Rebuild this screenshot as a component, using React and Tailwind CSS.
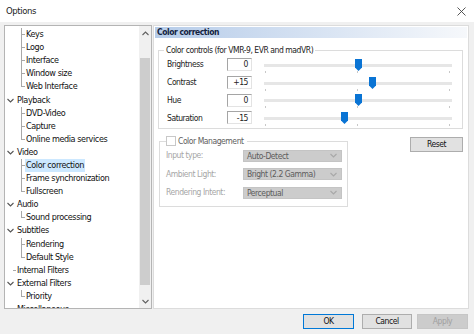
import React from 'react';

const tree = [
  { t: 'Keys', c: true }, { t: 'Logo', c: true }, { t: 'Interface', c: true }, { t: 'Window size', c: true }, { t: 'Web Interface', c: true, last: true },
  { t: 'Playback', p: true }, { t: 'DVD-Video', c: true }, { t: 'Capture', c: true }, { t: 'Online media services', c: true, last: true },
  { t: 'Video', p: true }, { t: 'Color correction', c: true, sel: true }, { t: 'Frame synchronization', c: true }, { t: 'Fullscreen', c: true, last: true },
  { t: 'Audio', p: true }, { t: 'Sound processing', c: true, last: true },
  { t: 'Subtitles', p: true }, { t: 'Rendering', c: true }, { t: 'Default Style', c: true, last: true },
  { t: 'Internal Filters', leaf: true },
  { t: 'External Filters', p: true }, { t: 'Priority', c: true, last: true },
  { t: 'Miscellaneous', leaf: true },
];

function Chevron({ up = false, color = '#606060' }) {
  return (
    <svg width="7" height="5" viewBox="0 0 7 5" className="block">
      <polyline points={up ? '0.5,4 3.5,1 6.5,4' : '0.5,1 3.5,4 6.5,1'} fill="none" stroke={color} strokeWidth="1.1" />
    </svg>
  );
}

function TreeRow({ item }) {
  if (item.c) {
    return (
      <div className="flex h-[13.1px] items-stretch">
        <div className="w-[16px] shrink-0" />
        <div className="flex w-[4px] shrink-0 flex-col">
          <div className="h-[7px] border-b border-l border-[#a8a8a8]" />
          <div className={item.last ? 'flex-1' : 'flex-1 border-l border-[#a8a8a8]'} />
        </div>
        <span className={item.sel ? 'whitespace-nowrap bg-[#cce8ff] px-[1px] leading-[13px]' : 'whitespace-nowrap px-[1px] leading-[13px]'}>{item.t}</span>
      </div>
    );
  }
  if (item.leaf) {
    return (
      <div className="flex h-[13.1px] items-stretch">
        <div className="w-[8px] shrink-0" />
        <div className="h-[7px] w-[3px] shrink-0 border-b border-[#a8a8a8]" />
        <span className="ml-[1px] whitespace-nowrap leading-[13px]">{item.t}</span>
      </div>
    );
  }
  return (
    <div className="flex h-[13.1px] items-center">
      <div className="w-[2px] shrink-0" />
      <div className="flex w-[7px] shrink-0 justify-center"><Chevron color="#555" /></div>
      <div className="w-[3px] shrink-0" />
      <span className="whitespace-nowrap leading-[13px]">{item.t}</span>
    </div>
  );
}

function Thumb() {
  return (
    <svg width="7" height="12" viewBox="0 0 7 12" className="block">
      <path d="M0 0 H7 V8.5 L3.5 12 L0 8.5 Z" fill="#0a74d4" />
    </svg>
  );
}

function SliderRow({ label, value, pos }) {
  return (
    <div className="flex h-[17.7px] items-center">
      <span className="w-[68px] shrink-0 whitespace-nowrap pl-[8px]">{label}</span>
      <div className="flex h-[13px] w-[25px] shrink-0 items-center justify-end border border-b-[#e3e3e3] border-l-[#a5a5a5] border-r-[#e3e3e3] border-t-[#a5a5a5] bg-white pr-[3px]">{value}</div>
      <div className="relative ml-[12px] h-[18px] w-[188px]">
        <div className="absolute left-0 right-0 top-[8px] h-[3px] bg-[#e6e6e6]" />
        <div className="absolute left-[1px] top-[15px] h-[2px] w-[1px] bg-[#c8c8c8]" />
        <div className="absolute left-[93px] top-[15px] h-[2px] w-[1px] bg-[#c8c8c8]" />
        <div className="absolute right-[2px] top-[15px] h-[2px] w-[1px] bg-[#c8c8c8]" />
        <div className="absolute top-[3px]" style={{ left: pos - 3 }}><Thumb /></div>
      </div>
    </div>
  );
}

function Dropdown({ label, value }) {
  return (
    <div className="flex h-[12px] items-center">
      <span className="w-[83px] shrink-0 whitespace-nowrap pl-[6px] text-[#a6a6a6]">{label}</span>
      <div className="flex h-[12px] w-[99px] shrink-0 items-center justify-between border border-[#c4c4c4] bg-[#cccccc] pl-[3px] pr-[4px] text-[#5c5c5c]">
        <span className="whitespace-nowrap leading-[12px]">{value}</span>
        <Chevron color="#a8a8a8" />
      </div>
    </div>
  );
}

export default function App() {
  return (
    <div className="relative h-[334px] w-[474px] overflow-hidden bg-[#f0f0f0] font-['DejaVu_Sans_Condensed','DejaVu_Sans',sans-serif] text-[9px] tracking-[-0.4px] text-[#111]">
      {/* title bar */}
      <div className="flex h-[22px] items-center justify-between bg-white pl-[6px] pr-[8px]">
        <span className="text-[9.5px] text-[#222]">Options</span>
        <svg width="9" height="9" viewBox="0 0 9 9"><path d="M0.5 0.5 L8.5 8.5 M8.5 0.5 L0.5 8.5" stroke="#444" strokeWidth="0.9" /></svg>
      </div>

      {/* main */}
      <div className="flex gap-[1px] pl-[4px] pt-[3px]">
        {/* tree */}
        <div className="flex h-[284px] w-[148px] border border-[#b4b4b4] bg-white">
          <div className="flex-1 overflow-hidden pt-[2px]">
            {tree.map((it) => <TreeRow key={it.t} item={it} />)}
          </div>
          <div className="flex w-[12px] flex-col bg-[#f0f0f0]">
            <div className="flex h-[14px] items-center justify-center"><Chevron up color="#606060" /></div>
            <div className="h-[18px]" />
            <div className="mx-[1px] h-[227px] bg-[#cdcdcd]" />
            <div className="flex-1" />
            <div className="flex h-[14px] items-center justify-center"><Chevron color="#606060" /></div>
          </div>
        </div>

        {/* right panel */}
        <div className="flex h-[284px] w-[316px] flex-col border border-[#dcdcdc] bg-white text-[8.5px] tracking-[-0.45px]">
          <div className="mx-[1px] mt-[1px] flex h-[11px] items-center bg-linear-to-r from-[#b6cce9] to-[#f6f8fb] pl-[2px] text-[8.5px] font-bold leading-[11px] text-[#14233f]">
            Color correction
          </div>

          <fieldset className="ml-[4px] mr-[5px] mt-[6px] border border-[#dcdcdc] pb-[1px] text-[#222]">
            <legend className="ml-[5px] whitespace-nowrap px-[2px] leading-[12px]">Color controls (for VMR-9, EVR and madVR)</legend>
            <SliderRow label="Brightness" value="0" pos={94} />
            <SliderRow label="Contrast" value="+15" pos={108} />
            <SliderRow label="Hue" value="0" pos={94} />
            <SliderRow label="Saturation" value="-15" pos={80} />
          </fieldset>

          <div className="mt-[7px] flex items-start">
            <fieldset className="ml-[5px] w-[189px] border border-[#dcdcdc] pb-[7px]">
              <legend className="ml-[6px] flex items-center pr-[3px]">
                <span className="mr-[2px] h-[10px] w-[10px] border border-[#c8c8c8] bg-white" />
                <span className="whitespace-nowrap leading-[11px] text-[#5e5e5e]">Color Management</span>
              </legend>
              <div className="flex flex-col gap-[6.5px] pt-[3px]">
                <Dropdown label="Input type:" value="Auto-Detect" />
                <Dropdown label="Ambient Light:" value="Bright (2.2 Gamma)" />
                <Dropdown label="Rendering Intent:" value="Perceptual" />
              </div>
            </fieldset>
            <div className="ml-auto mr-[5px] mt-[1px] flex h-[15px] w-[53px] items-center justify-center border border-[#adadad] bg-[#e1e1e1]">Reset</div>
          </div>
        </div>
      </div>

      {/* buttons */}
      <div className="mt-[5px] flex justify-end pr-[6px] text-[8.5px] tracking-[-0.45px]">
        <div className="flex h-[15px] w-[51px] items-center justify-center border border-[#0078d7] bg-[#e1e1e1] text-[#111]">OK</div>
        <div className="ml-[8px] flex h-[15px] w-[50px] items-center justify-center border border-[#adadad] bg-[#e1e1e1] text-[#111]">Cancel</div>
        <div className="ml-[5px] flex h-[15px] w-[51px] items-center justify-center border border-[#c6c6c6] bg-[#cccccc] text-[#a0a0a0]">Apply</div>
      </div>
    </div>
  );
}
